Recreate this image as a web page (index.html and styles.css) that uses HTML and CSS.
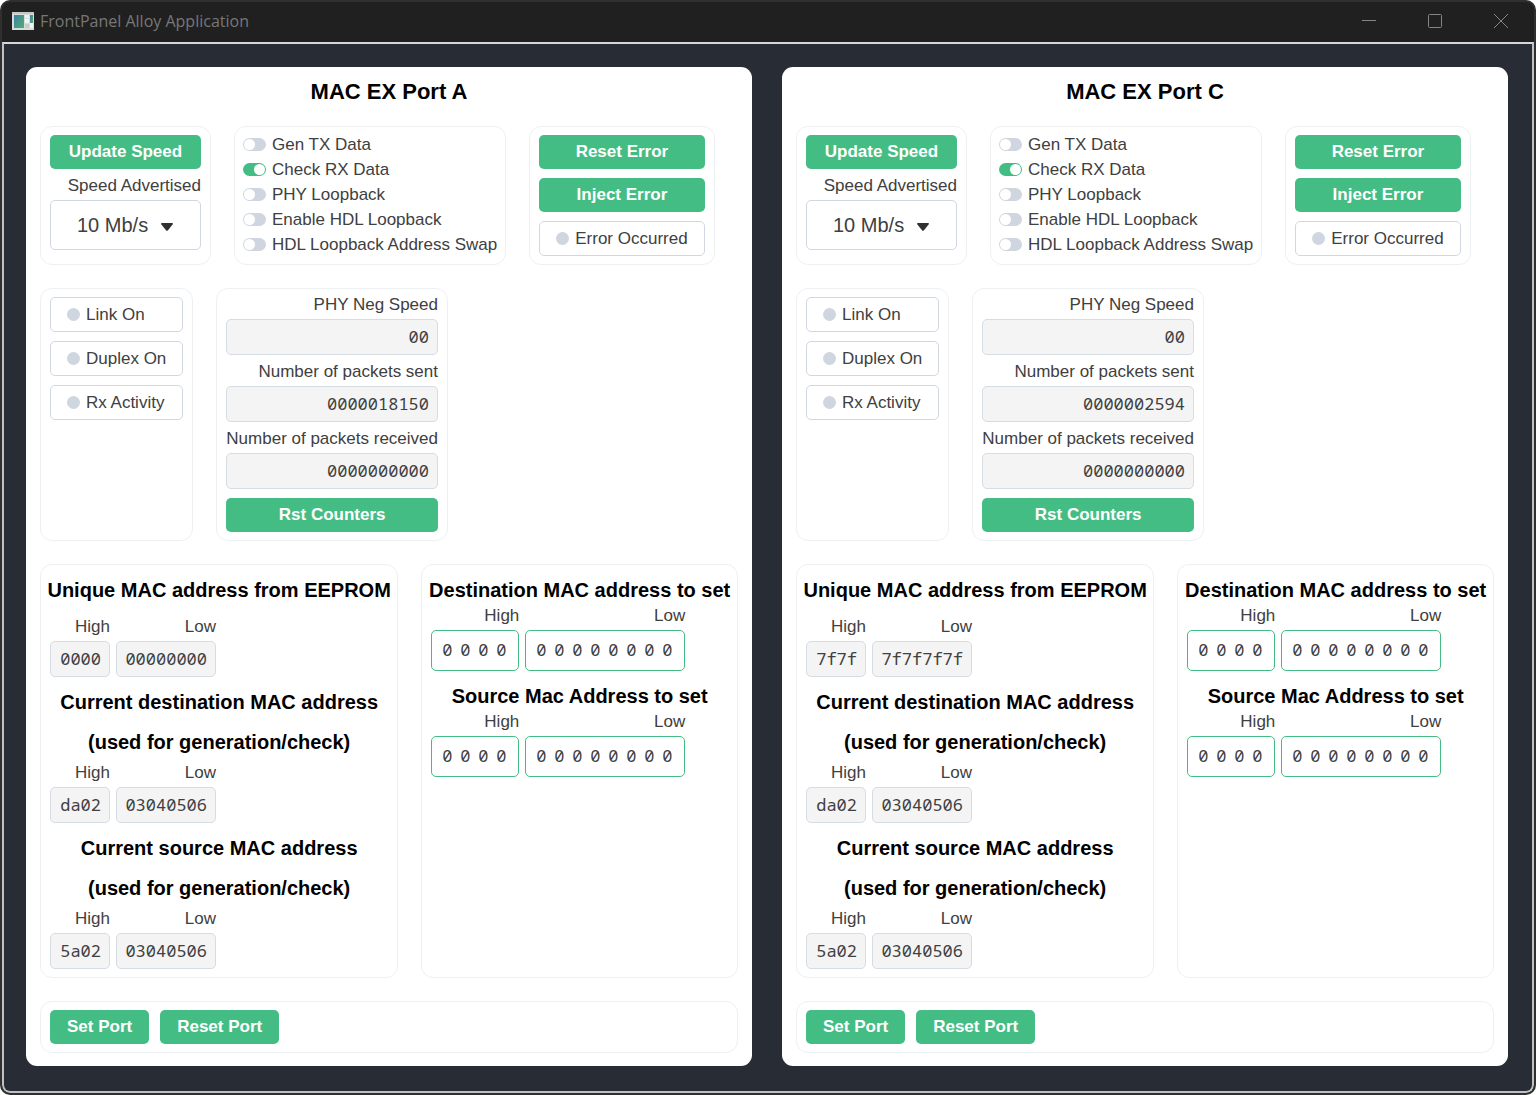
FILE: index.html
```html
<!DOCTYPE html>
<html lang="en">
<head>
<meta charset="utf-8">
<title>FrontPanel Alloy Application</title>
<link rel="stylesheet" href="styles.css">
</head>
<body>
<div class="window">
  <header class="titlebar">
    <svg class="app-icon" viewBox="0 0 22 18" aria-hidden="true">
      <defs><linearGradient id="pane" x1="0" y1="0" x2="1" y2="1"><stop offset="0" stop-color="#3f7fa6"/><stop offset="1" stop-color="#4fb06c"/></linearGradient></defs>
      <rect width="22" height="18" fill="#d9dcdc"/>
      <rect x="0" y="0" width="22" height="2" fill="#c4c8c8"/>
      <rect x="2" y="3" width="10" height="13" fill="url(#pane)"/>
      <rect x="13" y="3" width="4" height="3" fill="#eef0f0"/>
      <rect x="13" y="7" width="4" height="4" fill="#f4f5f5"/>
      <rect x="13" y="12" width="4" height="4" fill="#c9cccc"/>
      <rect x="18" y="3" width="3" height="8" fill="url(#pane)"/>
      <rect x="18" y="11" width="3" height="5" fill="#f2f3f3"/>
    </svg>
    <h1 class="app-title">FrontPanel Alloy Application</h1>
    <div class="window-buttons">
      <button type="button" class="window-button" aria-label="Minimize"><svg viewBox="0 0 16 16"><path d="M1 7.500h14"/></svg></button>
      <button type="button" class="window-button" aria-label="Maximize"><svg viewBox="0 0 16 16"><rect x="1.500" y="1.500" width="13" height="13" rx="1"/></svg></button>
      <button type="button" class="window-button" aria-label="Close"><svg viewBox="0 0 16 16"><path d="M1 1l14 14M15 1L1 15"/></svg></button>
    </div>
  </header>
  <main class="ports" id="ports"></main>
</div>
<template id="port-template">
  <section class="port">
    <h2 class="port-title"></h2>
    <div class="row">
      <div class="group">
        <button type="button" class="button">Update Speed</button>
        <div class="labelled">
          <label class="label" for="speed">Speed Advertised</label>
          <div class="select-box">
            <select class="select" id="speed"><option>10 Mb/s</option></select>
            <svg class="select-arrow" viewBox="0 0 14 10" aria-hidden="true"><path d="M2 1h10q1.600 0 .6 1.400L8 8.300q-1 1-2 0L1.400 2.400Q.4 1 2 1z"/></svg>
          </div>
        </div>
      </div>
      <div class="group toggles">
        <label class="toggle"><input type="checkbox">Gen TX Data</label>
        <label class="toggle"><input type="checkbox" checked>Check RX Data</label>
        <label class="toggle"><input type="checkbox">PHY Loopback</label>
        <label class="toggle"><input type="checkbox">Enable HDL Loopback</label>
        <label class="toggle"><input type="checkbox">HDL Loopback Address Swap</label>
      </div>
      <div class="group">
        <button type="button" class="button">Reset Error</button>
        <button type="button" class="button">Inject Error</button>
        <div class="status">Error Occurred</div>
      </div>
    </div>
    <div class="row">
      <div class="group">
        <div class="status">Link On</div>
        <div class="status">Duplex On</div>
        <div class="status">Rx Activity</div>
      </div>
      <div class="group">
        <div class="labelled"><label class="label" for="phy">PHY Neg Speed</label><input class="field" id="phy" readonly value="00"></div>
        <div class="labelled"><label class="label" for="sent">Number of packets sent</label><input class="field" id="sent" readonly></div>
        <div class="labelled"><label class="label" for="received">Number of packets received</label><input class="field" id="received" readonly value="0000000000"></div>
        <button type="button" class="button">Rst Counters</button>
      </div>
    </div>
    <div class="row">
      <div class="group addresses current">
        <div class="address unique">
          <h3 class="heading">Unique MAC address from EEPROM</h3>
          <div class="pair">
            <div class="labelled high"><label class="label" for="uh">High</label><input class="field" id="uh" readonly></div>
            <div class="labelled low"><label class="label" for="ul">Low</label><input class="field" id="ul" readonly></div>
          </div>
        </div>
        <div class="address">
          <h3 class="heading"><span>Current destination MAC address</span><span>(used for generation/check)</span></h3>
          <div class="pair">
            <div class="labelled high"><label class="label" for="dh">High</label><input class="field" id="dh" readonly value="da02"></div>
            <div class="labelled low"><label class="label" for="dl">Low</label><input class="field" id="dl" readonly value="03040506"></div>
          </div>
        </div>
        <div class="address">
          <h3 class="heading"><span>Current source MAC address</span><span>(used for generation/check)</span></h3>
          <div class="pair">
            <div class="labelled high"><label class="label" for="sh">High</label><input class="field" id="sh" readonly value="5a02"></div>
            <div class="labelled low"><label class="label" for="sl">Low</label><input class="field" id="sl" readonly value="03040506"></div>
          </div>
        </div>
      </div>
      <div class="group addresses target">
        <div class="address">
          <h3 class="heading">Destination MAC address to set</h3>
          <div class="pair">
            <div class="labelled"><label class="label" for="tdh-0">High</label><div class="digits" data-id="tdh" data-count="4"></div></div>
            <div class="labelled"><label class="label" for="tdl-0">Low</label><div class="digits" data-id="tdl" data-count="8"></div></div>
          </div>
        </div>
        <div class="address">
          <h3 class="heading">Source Mac Address to set</h3>
          <div class="pair">
            <div class="labelled"><label class="label" for="tsh-0">High</label><div class="digits" data-id="tsh" data-count="4"></div></div>
            <div class="labelled"><label class="label" for="tsl-0">Low</label><div class="digits" data-id="tsl" data-count="8"></div></div>
          </div>
        </div>
      </div>
    </div>
    <div class="group actions">
      <button type="button" class="button">Set Port</button>
      <button type="button" class="button">Reset Port</button>
    </div>
  </section>
</template>
<script src="ports.js"></script>
</body>
</html>
```
FILE: styles.css
```css
* { box-sizing: border-box; }
body {
  margin: 0;
  background: #fff;
  color: #404040;
  font: 17px/16px "Liberation Sans", Arial, sans-serif;
}
button, input, select { font: inherit; color: inherit; margin: 0; }
h1, h2, h3 { margin: 0; }

.window {
  display: flex;
  flex-direction: column;
  min-height: 100vh;
  border: 2px solid #303030;
  border-radius: 10px;
  background: #202020;
  overflow: hidden;
}
.titlebar { display: flex; align-items: center; height: 40px; padding: 0 0 2px 10px; }
.app-icon { width: 22px; height: 18px; margin-right: 6px; }
.app-title { flex: 1; font: 400 16px/24px "Open Sans", "Noto Sans", sans-serif; color: #777; }
.window-buttons { display: flex; }
.window-button {
  width: 66px;
  height: 36px;
  padding: 0;
  border: 0;
  background: none;
}
.window-button svg { display: block; width: 16px; height: 16px; margin: auto; fill: none; stroke: #858585; }

.ports {
  flex: 1;
  display: grid;
  grid-template-columns: repeat(2, minmax(0, 1fr));
  align-items: start;
  gap: 30px;
  padding: 23px 24px 25px 22px;
  border: 2px solid #bfc0c4;
  border-top-color: #d6d7da;
  border-radius: 0 0 8px 8px;
  background: #282c34;
}
.port {
  display: flex;
  flex-direction: column;
  gap: 23px;
  padding: 11px 14px 13px;
  border-radius: 11px;
  background: #fff;
}
.port-title { margin-bottom: -3px; font-size: 22px; line-height: 28px; text-align: center; color: #000; }
.row { display: flex; gap: 23px; }
.group {
  display: flex;
  flex-direction: column;
  gap: 9px;
  padding: 8px 9px;
  border: 1px solid #edf0f3;
  border-radius: 12px;
}
.button {
  height: 34px;
  padding: 0 17px;
  border: 0;
  border-radius: 5px;
  background: #44bd84;
  color: #fff;
  font-weight: 700;
}
.labelled { display: flex; flex-direction: column; gap: 6px; }
.label { text-align: right; white-space: nowrap; }

.select-box { position: relative; }
.select {
  appearance: none;
  display: block;
  width: 100%;
  height: 50px;
  padding: 0 51px 0 26px;
  border: 1px solid #d0d7e0;
  border-radius: 5px;
  background: #fff;
  font-size: 20px;
  line-height: 24px;
}
.select-arrow { position: absolute; right: 27px; top: 22px; width: 14px; height: 10px; fill: #303030; pointer-events: none; }

.toggles { gap: 8px; padding: 9px 8px 11px; }
.toggle { display: flex; align-items: center; gap: 6px; line-height: 17px; white-space: nowrap; }
.toggle input {
  appearance: none;
  display: flex;
  width: 23px;
  height: 13px;
  padding: 1px;
  border-radius: 7px;
  background: #d0d6df;
}
.toggle input::before { content: ""; width: 11px; height: 11px; border-radius: 50%; background: #fff; }
.toggle input:checked { justify-content: flex-end; background: #44bd84; }

.status {
  display: flex;
  align-items: center;
  gap: 6px;
  height: 35px;
  padding: 0 16px;
  border: 1px solid #d0d7e0;
  border-radius: 5px;
  white-space: nowrap;
}
.status::before { content: ""; width: 13px; height: 13px; border-radius: 50%; background: #d0d6df; }

.field {
  width: 0;
  min-width: 100%;
  height: 36px;
  padding: 0 8px 2px;
  border: 1px solid #d6dce3;
  border-radius: 5px;
  background: #f4f4f4;
  text-align: right;
}
.field, .digits input { font-family: "Noto Sans Mono", "DejaVu Sans Mono", monospace; font-size: 17px; }
.high { width: 60px; }
.low { width: 100px; }

.addresses { gap: 13px; min-width: 0; padding-top: 13px; }
.address { display: flex; flex-direction: column; gap: 11px; }
.unique { gap: 17px; }
.target .address { gap: 6px; }
.heading {
  display: flex;
  flex-direction: column;
  align-items: center;
  gap: 16px;
  font-size: 20px;
  line-height: 24px;
  white-space: nowrap;
  color: #000;
}
.pair { display: flex; gap: 6px; }
.digits {
  display: flex;
  height: 41px;
  padding: 0 8px 2px 6px;
  border: 1px solid #44bd84;
  border-radius: 5px;
}
.digits input { width: 18px; padding: 0; border: 0; background: none; text-align: center; }
.actions { flex-direction: row; gap: 11px; }
```
FILE: ports.js
```js
const ports = [
  { title: "MAC EX Port A", sent: "0000018150", uh: "0000", ul: "00000000" },
  { title: "MAC EX Port C", sent: "0000002594", uh: "7f7f", ul: "7f7f7f7f" }
];
const template = document.getElementById("port-template");
ports.forEach((port, index) => {
  const view = template.content.cloneNode(true);
  view.querySelector(".port-title").textContent = port.title;
  ["sent", "uh", "ul"].forEach(id => { view.querySelector("#" + id).value = port[id]; });
  view.querySelectorAll(".digits").forEach(box => {
    for (let i = 0; i < Number(box.dataset.count); i++) {
      const digit = document.createElement("input");
      digit.id = box.dataset.id + "-" + i;
      digit.maxLength = 1;
      digit.value = "0";
      digit.setAttribute("aria-label", "Digit " + (i + 1));
      box.append(digit);
    }
  });
  // Keep ids unique between the ports.
  view.querySelectorAll("select, input[id]").forEach(el => { el.id += "-p" + index; });
  view.querySelectorAll("label[for]").forEach(el => { el.htmlFor += "-p" + index; });
  document.getElementById("ports").append(view);
});
```
